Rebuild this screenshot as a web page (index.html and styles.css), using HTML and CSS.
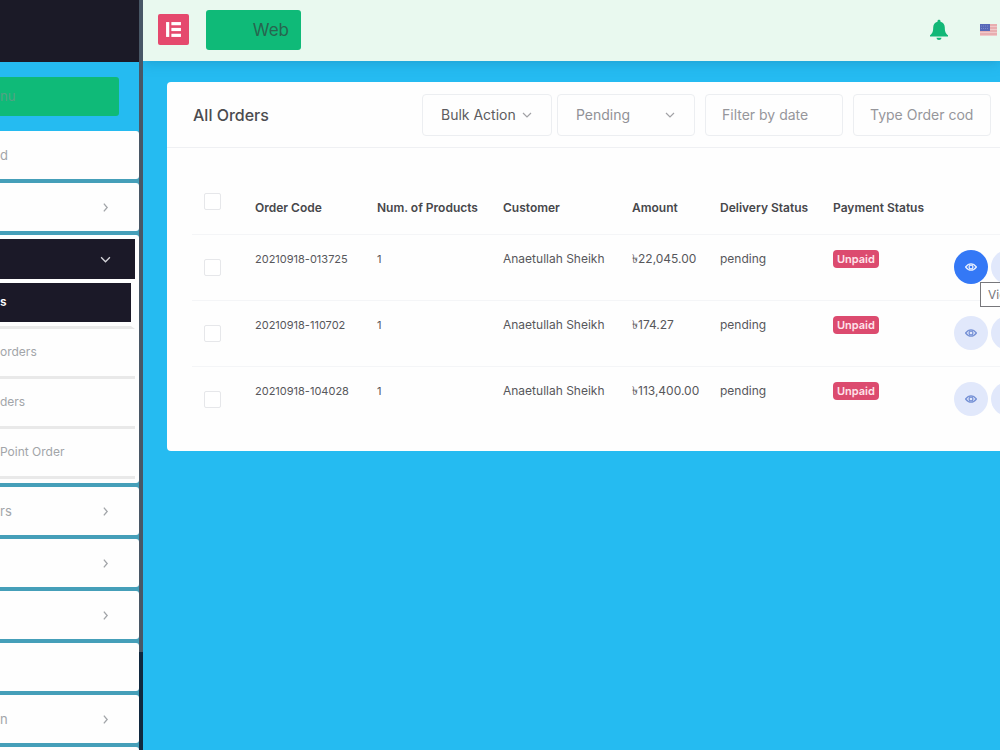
FILE: index.html
```html
<!DOCTYPE html>
<html lang="en">
<head>
<meta charset="utf-8">
<meta name="viewport" content="width=device-width, initial-scale=1">
<title>All Orders</title>
<link rel="stylesheet" href="styles.css">
</head>
<body>
<svg class="defs" aria-hidden="true">
  <symbol id="right" viewBox="0 0 10 10"><path d="M3.5 1.5 6.5 5 3.5 8.5" fill="none" stroke="currentColor" stroke-width="1.2"/></symbol>
  <symbol id="down" viewBox="0 0 10 10"><path d="M1 3 5 7 9 3" fill="none" stroke="currentColor" stroke-width="1.2"/></symbol>
  <symbol id="eye" viewBox="0 0 12 8"><path d="M.6 4Q3 .8 6 .8T11.400 4Q9 7.200 6 7.200T.6 4Z" fill="none" stroke="currentColor" stroke-width="1.300"/><circle cx="6" cy="4" r="1.900" fill="none" stroke="currentColor" stroke-width="1.200"/></symbol>
</svg>
<div class="app">
  <aside class="sidebar">
    <div class="brand"></div>
    <div class="search-wrap"><input class="menu-search" type="text" placeholder="nu" aria-label="Search in menu"></div>
    <nav class="menu">
      <a class="item" href="#">d</a>
      <a class="item" href="#" aria-label="Products"><svg class="chev"><use href="#right"/></svg></a>
      <div class="group">
        <a class="item open" href="#" aria-label="Sales"><svg class="chev"><use href="#down"/></svg></a>
        <a class="sub current" href="#">s</a>
        <a class="sub" href="#">orders</a>
        <a class="sub" href="#">ders</a>
        <a class="sub" href="#">Point Order</a>
      </div>
      <a class="item" href="#">rs<svg class="chev"><use href="#right"/></svg></a>
      <a class="item" href="#" aria-label="Files"><svg class="chev"><use href="#right"/></svg></a>
      <a class="item" href="#" aria-label="Reports"><svg class="chev"><use href="#right"/></svg></a>
      <a class="item" href="#" aria-label="Blog"></a>
      <a class="item" href="#">n<svg class="chev"><use href="#right"/></svg></a>
      <a class="item" href="#" aria-label="More"></a>
    </nav>
  </aside>
  <div class="rail"><div class="thumb"></div></div>
  <div class="page">
    <header class="topbar">
      <button class="toggle" aria-label="Toggle menu"><svg width="17" height="17" viewBox="0 0 16 16" fill="#fff"><rect x="1" y="1" width="3" height="14"/><rect x="6" y="1" width="9" height="3"/><rect x="6" y="6.500" width="9" height="3"/><rect x="6" y="12" width="9" height="3"/></svg></button>
      <a class="web" href="#">Web</a>
      <div class="tools">
        <button class="bell" aria-label="Notifications"><svg width="20" height="22" viewBox="0 0 20 22" fill="#12b877"><path d="M10 .8c.9 0 1.500.6 1.500 1.400v.6c2.700.7 4.300 2.900 4.300 5.700 0 4.700 1.100 6.100 3.200 7.800v1.200H1v-1.200c2.100-1.700 3.200-3.100 3.200-7.800 0-2.800 1.600-5 4.300-5.700v-.6C8.500 1.400 9.100.8 10 .8ZM7.500 18.800h5c-.2 1.500-1.200 2.200-2.500 2.200s-2.300-.7-2.500-2.200Z"/></svg></button>
        <button class="flag" aria-label="English"><svg width="17" height="12" viewBox="0 0 17 12"><rect width="17" height="12" fill="#f0c9ca"/><path d="M0 1h17M0 4h17M0 7h17M0 10h17" stroke="#e5a5a8" stroke-width="1.500"/><rect width="10" height="7" fill="#5668b8"/><path d="M1 2h8M1 4.500h8" stroke="#7c8bcb" stroke-width="1" stroke-dasharray="1 1"/></svg></button>
      </div>
    </header>
    <main class="content">
      <section class="card">
        <div class="card-head">
          <h1>All Orders</h1>
          <button class="field bulk">Bulk Action <svg class="caret"><use href="#down"/></svg></button>
          <div class="select-wrap">
            <select class="field" aria-label="Delivery status"><option>Pending</option><option>Delivered</option></select>
            <svg class="caret"><use href="#down"/></svg>
          </div>
          <input class="field" type="text" placeholder="Filter by date" aria-label="Filter by date">
          <input class="field" type="text" placeholder="Type Order cod" aria-label="Order code">
        </div>
        <table class="orders">
          <colgroup><col class="c-check"><col class="c-code"><col class="c-num"><col class="c-customer"><col class="c-amount"><col class="c-delivery"><col class="c-payment"><col></colgroup>
          <thead>
            <tr><th><input type="checkbox" aria-label="Select all"></th><th>Order Code</th><th>Num. of Products</th><th>Customer</th><th>Amount</th><th>Delivery Status</th><th>Payment Status</th><th></th></tr>
          </thead>
          <tbody>
            <tr><td class="mid"><input type="checkbox" aria-label="Select order 20210918-013725"></td><td class="code">20210918-013725</td><td class="code">1</td><td>Anaetullah Sheikh</td><td>৳22,045.00</td><td>pending</td><td><span class="badge">Unpaid</span></td>
              <td class="mid"><div class="actions"><button class="round active" aria-label="View"><svg class="eye"><use href="#eye"/></svg><span class="tip">View</span></button><button class="round" aria-label="Download"></button></div></td></tr>
            <tr><td class="mid"><input type="checkbox" aria-label="Select order 20210918-110702"></td><td class="code">20210918-110702</td><td class="code">1</td><td>Anaetullah Sheikh</td><td>৳174.27</td><td>pending</td><td><span class="badge">Unpaid</span></td>
              <td class="mid"><div class="actions"><button class="round" aria-label="View"><svg class="eye"><use href="#eye"/></svg></button><button class="round" aria-label="Download"></button></div></td></tr>
            <tr><td class="mid"><input type="checkbox" aria-label="Select order 20210918-104028"></td><td class="code">20210918-104028</td><td class="code">1</td><td>Anaetullah Sheikh</td><td>৳113,400.00</td><td>pending</td><td><span class="badge">Unpaid</span></td>
              <td class="mid"><div class="actions"><button class="round" aria-label="View"><svg class="eye"><use href="#eye"/></svg></button><button class="round" aria-label="Download"></button></div></td></tr>
          </tbody>
        </table>
      </section>
    </main>
  </div>
</div>
</body>
</html>
```
FILE: styles.css
```css
* { box-sizing: border-box; }
body { margin: 0; background: #25bbf1; font-family: Inter, "Noto Sans", sans-serif; font-size: 12px; color: #57575b; }
button, input, select { font: inherit; color: inherit; }
button { border: 0; padding: 0; background: none; }
a { color: inherit; text-decoration: none; }
.defs { position: absolute; width: 0; height: 0; }
.app { display: flex; height: 100vh; overflow: hidden; }

.sidebar { flex: 0 0 139px; overflow: hidden; }
.brand { height: 62px; background: #1b1a27; }
.search-wrap { padding: 15px 20px 15px 0; }
.menu-search { display: block; width: 100%; height: 39px; padding: 0 0 2px; border: 0; border-radius: 0 3px 3px 0; background: #0fba78; font-size: 13px; }
.menu-search::placeholder { color: #54a184; opacity: 1; }
.menu { display: flex; flex-direction: column; gap: 4px; padding-bottom: 4px; background: #459fb9; color: #a2a5a9; font-size: 13px; }
.item { display: flex; flex: none; align-items: center; height: 48px; padding-right: 28px; background: #fefefe; border-radius: 0 3px 3px 0; }
.chev { width: 11px; height: 11px; margin-left: auto; }
.group { display: flex; flex-direction: column; height: 248px; padding: 4px 4px 0 0; background: #fefefe; border-radius: 0 3px 3px 0; }
.item.open { height: 40px; margin-bottom: 4px; padding-right: 24px; border-radius: 0; background: #1b1928; color: #d5d5da; }
.sub { display: flex; align-items: center; height: 50px; padding-bottom: 3px; border-bottom: 3px solid #e9e9e9; font-size: 12px; }
.sub.current { height: 46px; padding-bottom: 6px; border-right: 4px solid #fefefe; background: linear-gradient(#1b1928, #1b1928) no-repeat 0 0 / 100% 39px; color: #fff; font-weight: 600; }
.rail { flex: 0 0 4px; background: #485766; }
.thumb { height: 100%; background: linear-gradient(#485766 87%, #10283f 87%); }

.page { flex: 1; min-width: 0; overflow: hidden; }
.topbar { display: flex; align-items: center; height: 61px; padding: 0 3px 2px 15px; background: #e9f9ef; box-shadow: 0 1px 12px #18709966; }
.toggle { display: grid; place-items: center; width: 31px; height: 31px; border-radius: 2px; background: #e5496d; }
.web { display: flex; align-items: center; justify-content: flex-end; width: 95px; height: 40px; margin-left: 17px; padding-right: 12px; border-radius: 3px; background: #0fba78; color: #28654f; font-size: 17px; }
.tools { display: flex; align-items: center; gap: 31px; margin-left: auto; }
.bell, .flag { display: flex; }

.content { padding: 21px 0 0 24px; }
.card { padding-bottom: 19px; border-radius: 4px 0 0 4px; background: #fefefe; }
.card-head { display: flex; align-items: center; gap: 10px; height: 66px; padding: 0 9px 0 26px; border-bottom: 1px solid #eff0f3; }
h1 { margin: 0 auto 0 0; font-size: 16px; font-weight: 500; color: #4b4b4f; }
.field { flex: none; width: 138px; height: 42px; padding: 0 16px; border: 1px solid #eceef1; border-radius: 4px; background: #fefefe; color: #919196; font-size: 14px; }
.field::placeholder { color: #96969b; opacity: 1; }
.bulk { display: flex; align-items: center; justify-content: space-between; width: 130px; margin-right: -5px; padding: 0 19px 0 18px; color: #5c5c60; }
.select-wrap { position: relative; display: flex; }
.select-wrap .field { appearance: none; padding-left: 18px; }
.select-wrap .caret { position: absolute; right: 20px; top: 16px; pointer-events: none; }
.caret { flex: none; width: 10px; height: 10px; color: #a2a2a6; }

.orders { width: calc(100% - 25px); margin-left: 25px; border-collapse: collapse; table-layout: fixed; }
.c-check { width: 51px; }
.c-code { width: 122px; }
.c-num { width: 126px; }
.c-customer { width: 129px; }
.c-amount { width: 88px; }
.c-delivery { width: 113px; }
.c-payment { width: 121px; }
th, td { padding: 15px 0 0 12px; text-align: left; vertical-align: top; line-height: 18px; white-space: nowrap; }
th { height: 86px; padding-top: 51px; color: #47474b; font-weight: 600; }
th:first-child { padding-top: 45px; }
td { height: 66px; border-top: 1px solid #f4f5f7; }
td.mid { padding-top: 0; vertical-align: middle; }
.code { font-size: 11px; }
input[type="checkbox"] { display: block; appearance: none; width: 17px; height: 17px; margin: 0; border: 1px solid #e6e7ea; border-radius: 2px; background: #fff; }
.mid input[type="checkbox"], th input[type="checkbox"] { margin-left: 0; }
.badge { display: inline-block; padding: 0 4px; border-radius: 4px; background: #dc4b6f; color: #ffe3ea; font-size: 11px; font-weight: 600; }
.actions { display: flex; gap: 3px; }
.round { position: relative; display: grid; flex: none; place-items: center; width: 34px; height: 34px; border-radius: 50%; background: #e1e8fb; color: #7792d6; }
.round.active { background: #3478f6; color: #e3edff; }
.eye { width: 12px; height: 8px; }
.tip { position: absolute; z-index: 1; left: 26px; top: 32px; height: 25px; padding: 0 7px; border: 1px solid #77777b; background: #fff; color: #77777b; font-size: 12px; line-height: 23px; }
```
